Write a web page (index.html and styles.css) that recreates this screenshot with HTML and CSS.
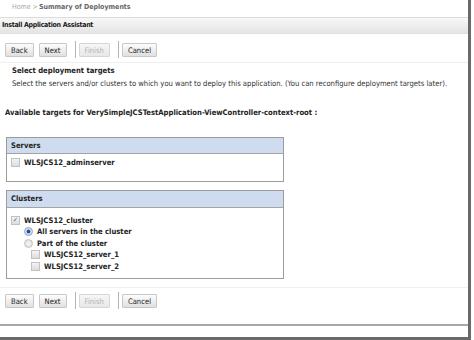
FILE: index.html
```html
<!DOCTYPE html>
<html lang="en">
<head>
  <meta charset="UTF-8">
  <title>Summary of Deployments</title>
  <link rel="stylesheet" href="styles.css">
</head>
<body>
<div class="page">
  <div class="crumbs"><span class="crumb-home">Home &gt;</span><b>Summary of Deployments</b></div>
  <div class="title-bar">Install Application Assistant</div>

  <div class="toolbar">
    <button class="btn">Back</button>
    <button class="btn">Next</button>
    <span class="sep"></span>
    <button class="btn" disabled>Finish</button>
    <span class="sep"></span>
    <button class="btn">Cancel</button>
  </div>

  <section class="intro">
    <h2>Select deployment targets</h2>
    <p>Select the servers and/or clusters to which you want to deploy this application. (You can reconfigure deployment targets later).</p>
  </section>

  <h3 class="avail">Available targets for VerySimpleJCSTestApplication-ViewController-context-root :</h3>

  <div class="group">
    <div class="group-head">Servers</div>
    <div class="group-body servers">
      <label class="opt"><span class="check"></span>WLSJCS12_adminserver</label>
    </div>
  </div>

  <div class="group">
    <div class="group-head">Clusters</div>
    <div class="group-body">
      <label class="opt"><span class="check on">&#10003;</span>WLSJCS12_cluster</label>
      <label class="opt lvl1"><span class="radio on"></span>All servers in the cluster</label>
      <label class="opt lvl1"><span class="radio"></span>Part of the cluster</label>
      <label class="opt lvl2"><span class="check"></span>WLSJCS12_server_1</label>
      <label class="opt lvl2"><span class="check"></span>WLSJCS12_server_2</label>
    </div>
  </div>

  <div class="toolbar bottom">
    <button class="btn">Back</button>
    <button class="btn">Next</button>
    <span class="sep"></span>
    <button class="btn" disabled>Finish</button>
    <span class="sep"></span>
    <button class="btn">Cancel</button>
  </div>
  <div class="foot"></div>
</div>
</body>
</html>
```

FILE: styles.css
```css
body {
  margin: 0;
  background: #fff;
  font-family: "DejaVu Sans Condensed", "Liberation Sans", sans-serif;
  font-size: 7.6px;
  color: #222;
}
.page {
  width: 468px;
  height: 337px;
  border-right: 3px solid #6a6a6a;
  border-bottom: 3px solid #6a6a6a;
  overflow: hidden;
}
.crumbs {
  height: 17px;
  line-height: 14px;
  padding-left: 12px;
  border-bottom: 1px solid #dcdcdc;
  color: #666;
  font-size: 7px;
}
.crumb-home {
  color: #a8a8a8;
  margin-right: 1px;
}
.title-bar {
  height: 15px;
  line-height: 15px;
  padding-left: 2px;
  font-size: 7px;
  font-weight: bold;
  letter-spacing: -0.3px;
  color: #1a1a1a;
  background: linear-gradient(to bottom, #f8f8f8, #e4e4e4);
  border-bottom: 1px solid #e0e0e0;
}
.toolbar {
  display: flex;
  align-items: flex-start;
  height: 19px;
  padding: 9px 0 0 5px;
  border-bottom: 1px solid #efefef;
}
.btn {
  height: 14px;
  padding: 0 5px;
  margin-right: 5px;
  font: inherit;
  color: #222;
  background: linear-gradient(to bottom, #fdfdfd, #e0e0e0);
  border: 1px solid #c8c8c8;
  border-radius: 1px;
}
.btn:disabled {
  color: #b0b0b0;
  background: linear-gradient(to bottom, #f6f6f6, #e8e8e8);
  border-color: #d6d6d6;
}
.sep {
  width: 1px;
  height: 17px;
  margin: -2px 3px 0;
  background: #b4b4b4;
}
.intro {
  padding: 3px 12px 0;
}
.intro h2 {
  margin: 0;
  font-size: 7.6px;
  line-height: 10px;
}
.intro p {
  margin: 3px 0 0;
  line-height: 10px;
  color: #333;
}
.avail {
  margin: 19px 0 0 5px;
  font-size: 7.6px;
  line-height: 10px;
}
.group {
  width: 276px;
  margin: 19px 0 0 6px;
  border: 1px solid #9c9c9c;
}
.group + .group {
  margin-top: 8px;
}
.group-head {
  height: 15px;
  line-height: 15px;
  padding-left: 4px;
  font-weight: bold;
  background: #cfdbee;
  border-bottom: 1px solid #a4a4a4;
}
.group + .group .group-head {
  height: 16px;
  line-height: 16px;
}
.group-body {
  display: flex;
  flex-direction: column;
  padding: 7px 0 6px 4px;
}
.group-body.servers {
  padding: 3px 0 12px 4px;
}
.opt {
  display: flex;
  align-items: center;
  height: 11.5px;
  font-weight: bold;
  color: #222;
}
.lvl1 { padding-left: 13px; }
.lvl2 { padding-left: 20px; }
.check {
  width: 7px;
  height: 7px;
  margin-right: 4px;
  border: 1px solid #c2c2c2;
  background: linear-gradient(to bottom, #f4f4f4, #dcdcdc);
  font-size: 7px;
  line-height: 7px;
  text-align: center;
  color: #5a6f9a;
}
.radio {
  width: 7px;
  height: 7px;
  margin-right: 4px;
  border: 1px solid #c2c2c2;
  border-radius: 50%;
  background: radial-gradient(circle, #f8f8f8, #d8d8d8);
}
.radio.on {
  background: radial-gradient(circle, #2a4f8f 0 1.6px, #c8d8ee 2.2px, #e8eef6);
  border-color: #8ea3c4;
}
.bottom {
  margin-top: 8px;
  height: 13px;
  padding-top: 6px;
  border-top: 1px solid #f0f0f0;
  border-bottom: none;
}
.foot {
  margin-top: 17px;
  height: 2px;
  background: #a8a8a8;
}
```
